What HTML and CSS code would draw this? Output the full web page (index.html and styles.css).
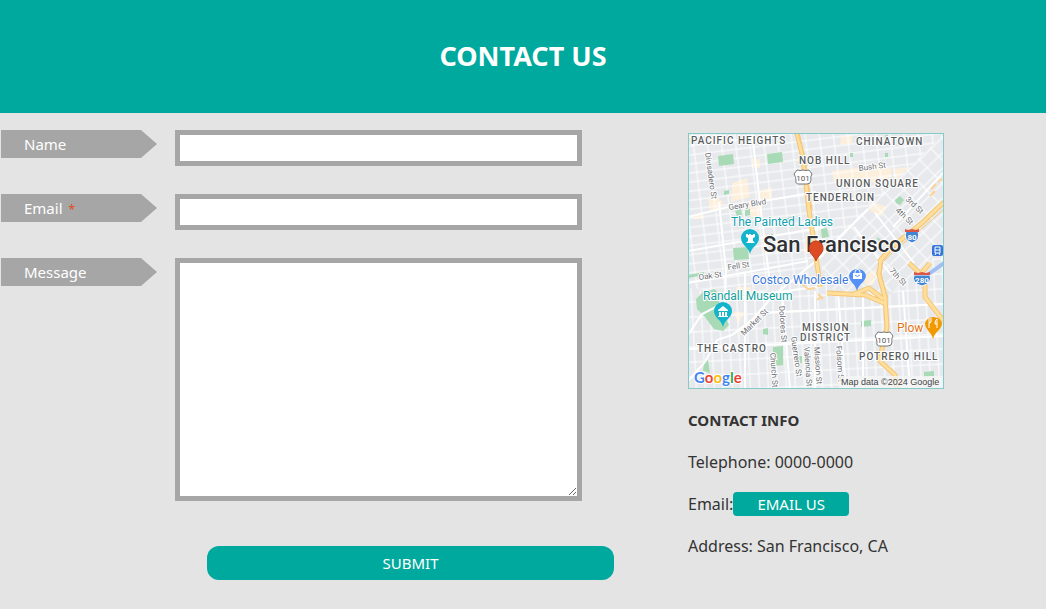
FILE: index.html
```html
<!DOCTYPE html>
<html lang="en">
<head>
<meta charset="utf-8">
<meta name="viewport" content="width=device-width, initial-scale=1">
<title>Contact us</title>
<link rel="stylesheet" href="styles.css">
</head>
<body>
<header class="banner"><h1 class="banner-title">CONTACT US</h1></header>
<main class="content">
  <form class="form">
    <div class="row">
      <label class="tag" for="name">Name</label>
      <input class="field" id="name" type="text">
    </div>
    <div class="row">
      <label class="tag" for="email">Email <span class="required">*</span></label>
      <input class="field" id="email" type="email" required>
    </div>
    <div class="row">
      <label class="tag" for="message">Message</label>
      <textarea class="field message" id="message"></textarea>
    </div>
    <button class="submit" type="submit">SUBMIT</button>
  </form>
  <aside class="info">
    <svg class="map" viewBox="0 0 256 256" role="img" aria-label="Map of San Francisco">
      <defs>
        <pattern id="west" width="14" height="9" patternUnits="userSpaceOnUse" patternTransform="rotate(-7)">
          <path class="street" d="M0 4H14M4 0V9"/>
        </pattern>
        <pattern id="soma" width="16" height="11" patternUnits="userSpaceOnUse" patternTransform="rotate(-44)">
          <path class="street" d="M0 4H16M4 0V11"/>
        </pattern>
        <pattern id="mission" width="9" height="15" patternUnits="userSpaceOnUse" patternTransform="rotate(-3)">
          <path class="street" d="M0 4H9M4 0V15"/>
        </pattern>
      </defs>
      <rect width="256" height="256" fill="#e7e9ec"/>
      <g fill="#fcefdc">
        <path d="M44 50l15-5 3 19-19 5zM64 26h8v9h-8zM71 58l13-4v12l-13 2zM61 72l13-2-2 16-9-2zM144 38l48-6 12 4-2 12-28 2-28-1zM20 66l9-2 6 5-4 8h-9zM6 82h9v4H6zM153 3l11-1v8l-12 2zM184 69l15 5-6 9-11-5zM48 154h15v8H48zM45 179h11l-5 12zM178 142l10-6-2 15-10 1zM205 36l16-2-14 14z"/>
      </g>
      <path d="M0 0H256L132 127 65 166 0 154z" fill="url(#west)"/>
      <path d="M256 0V120L205 158 184 164 132 154 136 116z" fill="url(#soma)"/>
      <path d="M0 155L65 167 132 132 148 158 198 165 256 116V256H0z" fill="url(#mission)"/>
      <g fill="#a8dab5">
        <path d="M30 23l15-2 1 10-15 2zM79 21l15-2 1 10-15 2zM36 58l5-1v4l-5 1zM47 78l6-2 1 6-5 1zM57 77l5-1v6l-5 1zM45 115l15-1 1 12-15 1zM93 86l11-2v5l-11 1zM133 96l6-1 2 9-7 1zM207 67l5-4 4 4-4 5-4-2zM197 20h3v4h-3zM162 20h3v4h-3zM189 104l4 3-1 2-3-3zM173 188l10-1v6l-10 1zM85 214l10-1v19l-10 1zM75 196l5-1v7l-5-1zM111 223h3v7h-3zM236 239l10-1v5l-10 1zM16 229l4-2 2 13-7-2zM197 2h3v4h-3zM83 101h2v6h-2z"/>
        <path d="M8 166l7-7 12-3 5 8-1 7 5 9 5 12-6 6-9-2-9-12-8-8zM0 142l16-3v3L0 145z"/>
      </g>
      <g class="road">
        <path d="M0 84L40 74 128 59M31 69L38 138 36 190M64 0L73 79 82 150M0 118L136 94M0 150L120 128M48 165L134 153"/>
        <path d="M180 76L128 128 85 163 65 186 44 202 29 207 17 229 0 248M0 202L8 190 14 181 28 174"/>
        <path d="M57 140V256M94 160L102 256M127 158V256M150 160L158 256M175 164V256M215 158L222 256M0 216L256 203M70 180L256 171M166 94L203 142M256 39L205 94M187 80L226 130"/>
      </g>
      <g class="highway-edge">
        <path d="M109 0L115 25 121 77 126 110 130 138 132 154M191 129L204 114 234 90 256 69M193 127L191 141 197 164 199 194 194 216 192 228 207 242 209 256M139 160L177 162 196 170M166 161L181 155 195 166M221 130L237 145 237 164 247 177 256 188M242 130L231 143"/>
      </g>
      <g class="highway">
        <path d="M109 0L115 25 121 77 126 110 130 138 132 154M191 129L204 114 234 90 256 69M193 127L191 141 197 164 199 194 194 216 192 228 207 242 209 256M139 160L177 162 196 170M166 161L181 155 195 166M221 130L237 145 237 164 247 177 256 188M242 130L231 143"/>
      </g>
      <path class="highway-split" d="M196 128L207 117 237 93 256 76M194 129L193 142 200 165M110 0L117 25 124 77"/>
      <path d="M243 56l5-5M250 49l4-3M242 63l5-5M130 161l5 5M129 167l4-3M114 151l6 5 7-1" fill="none" stroke="#fdd293" stroke-width="2"/>
      <path d="M238 143L256 130" stroke="#a2bff4" stroke-width="4"/>

      <g class="district">
        <text x="3" y="11">PACIFIC HEIGHTS</text>
        <text x="168" y="12">CHINATOWN</text>
        <text x="111" y="31">NOB HILL</text>
        <text x="148" y="54">UNION SQUARE</text>
        <text x="118" y="68">TENDERLOIN</text>
        <text x="114" y="198">MISSION</text>
        <text x="112" y="208">DISTRICT</text>
        <text x="9" y="219">THE CASTRO</text>
        <text x="171" y="227">POTRERO HILL</text>
      </g>
      <g class="street-name">
        <text transform="translate(17 20) rotate(82)">Divisadero St</text>
        <text transform="translate(41 77) rotate(-9)">Geary Blvd</text>
        <text transform="translate(171 38) rotate(-7)">Bush St</text>
        <text transform="translate(40 137) rotate(-8)">Fell St</text>
        <text transform="translate(11 147) rotate(-8)">Oak St</text>
        <text transform="translate(217 67) rotate(43)">3rd St</text>
        <text transform="translate(207 78) rotate(43)">4th St</text>
        <text transform="translate(201 138) rotate(47)">7th St</text>
        <text transform="translate(56 203) rotate(-44)">Market St</text>
        <text transform="translate(91 173) rotate(86)">Dolores St</text>
        <text transform="translate(103 204) rotate(82)">Guerrero St</text>
        <text transform="translate(116 214) rotate(86)">Valencia St</text>
        <text transform="translate(126 214) rotate(86)">Mission St</text>
        <text transform="translate(148 213) rotate(86)">Folsom St</text>
        <text transform="translate(82 220) rotate(86)">Church St</text>
      </g>
      <g class="place">
        <text x="43" y="93" fill="#129eaf">The Painted Ladies</text>
        <text x="15" y="167" fill="#129e9b">Randall Museum</text>
        <text x="64" y="151" fill="#3978dc">Costco Wholesale</text>
        <text x="209" y="199" fill="#df7414">Plow</text>
      </g>
      <text class="city" x="75" y="119">San Francisco</text>

      <g id="pins">
        <path d="M62 121C60 113 53 112 53 105A9 9 0 0 1 71 105C71 112 64 113 62 121z" fill="#12b5cb"/>
        <path d="M58 101v3l2 1v3l-2 2h9l-2-2v-3l2-1v-3h-2v1h-2v-1h-2v1h-1v-1z" fill="#fff"/>
        <path d="M35 194C33 186 26 185 26 178A9 9 0 0 1 44 178C44 185 37 186 35 194z" fill="#12b5cb"/>
        <path d="M30 177l5-4 5 4v1H30zm1 2h2v4h-2zm3 0h2v4h-2zm3 0h2v4h-2zM30 183h10v1H30z" fill="#fff"/>
        <path d="M169 158C167 150 161 149 161 142A9 9 0 0 1 178 142C178 149 171 150 169 158z" fill="#5491f5"/>
        <path d="M165 140h9v6h-9z" fill="#fff"/>
        <path d="M167 140v-1a2 2 0 0 1 5 0v1" fill="none" stroke="#fff"/>
        <path d="M167 142q2 3 5 0" fill="none" stroke="#5491f5"/>
        <path d="M245 206C243 198 237 197 237 190A9 9 0 0 1 254 190C254 197 247 198 245 206z" fill="#f29900"/>
        <path d="M243 185v4q-1 1-2 1v5M241 185v4q0 1 1 1M249 195v-9q-2 1-2 5h2" fill="none" stroke="#fff"/>
        <path d="M128 128C126 122 121 121 121 115A7 7 0 0 1 135 115C135 121 130 122 128 128z" fill="#dd4b24" stroke="#bd3d1c"/>
        <rect x="244" y="112" width="11" height="11" rx="2" fill="#3674d9"/>
        <path d="M247 114h5v6h-5zM247 122l1-2m4 2-1-2" fill="none" stroke="#fff"/><path d="M247 117h5" stroke="#fff"/>
      </g>
      <g class="shield">
        <path d="M109 37q3 1 6 0 3 1 6 0l3 4q-2 3-1 6 0 4-4 4h-8q-4 0-3-4 0-3-2-6z"/>
        <text x="115" y="48">101</text>
        <path d="M190 199q3 1 6 0 3 1 6 0l3 4q-2 3-1 6 0 4-4 4h-8q-4 0-3-4 0-3-2-6z"/>
        <text x="196" y="210">101</text>
      </g>
      <g class="interstate">
        <path d="M218 98h12q3 9-6 12-9-3-6-12z"/><path class="crown" d="M217 96l3 1 4-1 4 1 3-1v3h-14z"/><text x="224" y="107">80</text>
        <path d="M226 142h16q3 8-8 11-11-3-8-11z"/><path class="crown" d="M226 139l4 1 4-1 4 1 4-1v3h-16z"/><text x="234" y="150">280</text>
      </g>
      <text class="logo" x="6" y="250"><tspan fill="#4285f4">G</tspan><tspan fill="#ea4335">o</tspan><tspan fill="#fbbc05">o</tspan><tspan fill="#4285f4">g</tspan><tspan fill="#34a853">l</tspan><tspan fill="#ea4335">e</tspan></text>
      <path d="M151 243H256V256H151z" fill="#f5f5f5" fill-opacity=".8"/>
      <text class="credit" x="153" y="252">Map data ©2024 Google</text>
      <rect x="0" y="0" width="256" height="256" fill="none" stroke="#83cbc8" stroke-width="2"/>
    </svg>
    <h2 class="info-title">CONTACT INFO</h2>
    <p class="line">Telephone: 0000-0000</p>
    <p class="line">Email:<a class="email-link" href="#email">EMAIL US</a></p>
    <p class="line">Address: San Francisco, CA</p>
  </aside>
</main>
</body>
</html>
```
FILE: styles.css
```css
* { box-sizing: border-box; }
body {
  margin: 0;
  background: #e4e4e4;
  color: #333;
  font: 16px/24px "Noto Sans", sans-serif;
}
.banner {
  padding: 38px 16px 39px;
  background: #00a99d;
  color: #fff;
  text-align: center;
}
.banner-title { margin: 0; font-size: 27px; line-height: 36px; font-weight: 700; }
.content {
  display: grid;
  grid-template-columns: minmax(0, 1fr) 256px;
  gap: 74px;
  padding: 17px 102px 29px 0;
}
.form { display: flex; flex-direction: column; gap: 28px; }
.row {
  display: grid;
  grid-template-columns: 157px minmax(0, 1fr);
  gap: 18px;
  align-items: start;
  padding-right: 32px;
}
.tag {
  height: 28px;
  margin-left: 1px;
  padding: 0 24px 0 23px;
  background: #a6a6a6;
  color: #fff;
  font-size: 15px;
  line-height: 28px;
  clip-path: polygon(0 0, calc(100% - 16px) 0, 100% 50%, calc(100% - 16px) 100%, 0 100%);
}
.required { margin-left: 2px; color: #e04b23; font-size: 12px; }
.field {
  display: block;
  width: 100%;
  height: 36px;
  margin: 0;
  padding: 4px;
  border: 5px solid #a6a6a6;
  border-radius: 0;
  background: #fff;
  font: inherit;
  outline: 0;
}
.message { height: 243px; resize: vertical; }
.submit {
  height: 34px;
  margin: 17px 0 0 207px;
  padding: 0;
  border: 0;
  border-radius: 12px;
  background: #00a99d;
  color: #fff;
  font: inherit;
  font-size: 15px;
}
.info { padding-top: 3px; }
.map { display: block; width: 100%; margin-bottom: 19px; font-family: Roboto, sans-serif; }
.info-title { margin: 0 0 18px; font-size: 15px; line-height: 24px; font-weight: 700; }
.line { margin: 0 0 18px; white-space: nowrap; }
.email-link {
  display: inline-block;
  padding: 0 24px;
  border-radius: 4px;
  background: #00a99d;
  color: #fff;
  font-size: 15px;
  text-decoration: none;
}
.street { fill: none; stroke: #fff; stroke-width: 1; }
.road { fill: none; stroke: #fff; stroke-width: 2; }
.highway, .highway-edge, .highway-split { fill: none; stroke-linejoin: round; }
.highway-edge { stroke: #f5c471; stroke-width: 5; }
.highway { stroke: #ffdf9b; stroke-width: 3; }
.highway-split { stroke: #f7c978; stroke-width: 1; }
.map text { paint-order: stroke; stroke: #fff; stroke-width: 2px; stroke-linejoin: round; }
.district { font-size: 10px; font-weight: 500; letter-spacing: 1px; fill: #5a5d60; }
.street-name { font-size: 8px; fill: #6b6e72; }
.place { font-size: 12px; }
.city { font-size: 22px; font-weight: 500; fill: #303134; }
.shield path { fill: #fff; stroke: #75787b; }
.shield text { font-size: 8px; text-anchor: middle; fill: #555; }
.interstate path { fill: #4285d4; stroke: #fff; }
.interstate .crown { fill: #dc5647; stroke: none; }
.map .interstate text { font-size: 8px; font-weight: 700; text-anchor: middle; fill: #fff; stroke: none; }
.logo { font-family: Lato, sans-serif; font-size: 15px; font-weight: 700; }
.map .credit { font-family: "Liberation Sans", sans-serif; font-size: 9px; fill: #444; stroke: none; }
```
